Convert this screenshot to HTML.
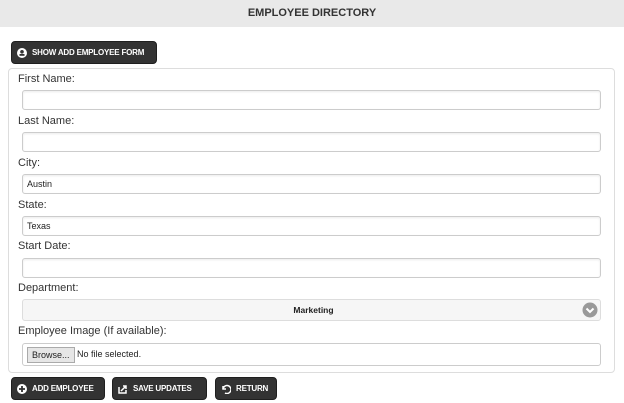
<!DOCTYPE html><html><head><style>
body{margin:0;width:624px;height:403px;background:#fff;font-family:"Liberation Sans",sans-serif;position:relative;overflow:hidden}
.hd{position:absolute;left:0;top:0;width:624px;height:27px;background:#e9e9e9;text-align:center;font-weight:bold;font-size:11px;line-height:27px;color:#333}
.btn{position:absolute;height:23px;background:#333;border:1px solid #1f1f1f;border-radius:4px;color:#fff;font-weight:bold;font-size:8px;line-height:21px;box-sizing:border-box;white-space:nowrap;letter-spacing:-0.2px}
.btn svg{position:absolute;left:5px;top:6px;display:block}
.btn b{position:absolute;left:20px}
.box{position:absolute;left:8px;top:68px;width:607px;height:305px;border:1px solid #ddd;border-radius:4px;box-sizing:border-box}
.lb{position:absolute;left:18px;font-size:11px;color:#333}
.in{position:absolute;left:22px;width:579px;height:20px;border:1px solid #ccc;border-radius:3px;box-sizing:border-box;font-size:9px;line-height:18px;padding-left:4px;color:#222;box-shadow:inset 0 1px 2px rgba(0,0,0,.08)}
</style></head><body>
<div class="hd">EMPLOYEE DIRECTORY</div>
<div class="btn" style="left:11px;top:41px;width:146px"><svg width="10" height="10"><circle cx="5" cy="5" r="5" fill="#fff"/><circle cx="5" cy="3.8" r="1.8" fill="#333"/><rect x="2.5" y="6" width="5" height="1.8" fill="#333"/></svg><b>SHOW ADD EMPLOYEE FORM</b></div>
<div class="box"></div>
<div class="lb" style="top:73px">First Name:</div><div class="in" style="top:90px"></div>
<div class="lb" style="top:115px">Last Name:</div><div class="in" style="top:132px"></div>
<div class="lb" style="top:157px">City:</div><div class="in" style="top:174px">Austin</div>
<div class="lb" style="top:199px">State:</div><div class="in" style="top:216px">Texas</div>
<div class="lb" style="top:240px">Start Date:</div><div class="in" style="top:258px"></div>
<div class="lb" style="top:282px">Department:</div>
<div class="in" style="top:299px;height:22px;background:#f6f6f6;border-color:#ddd;text-align:center;font-weight:bold;font-size:8.5px;line-height:20px;box-shadow:none">Marketing
<svg style="position:absolute;right:2px;top:2px" width="16" height="16"><circle cx="8" cy="8" r="7.5" fill="#999"/><path d="M4.5 6.5L8 10L11.5 6.5" stroke="#fff" stroke-width="2" fill="none"/></svg></div>
<div class="lb" style="top:325px">Employee Image (If available):</div>
<div class="in" style="top:343px;height:23px;box-shadow:none;padding-left:4px;line-height:21px"><span style="display:inline-block;background:#e6e6e6;border:1px solid #aaa;height:14px;line-height:14px;padding:0 4px;font-size:9px;vertical-align:middle">Browse...</span> <span style="font-size:9px">No file selected.</span></div>
<div class="btn" style="left:11px;top:377px;width:94px"><svg width="10" height="10"><circle cx="5" cy="5" r="5" fill="#fff"/><path d="M5 2v6M2 5h6" stroke="#333" stroke-width="1.8"/></svg><b>ADD EMPLOYEE</b></div>
<div class="btn" style="left:112px;top:377px;width:95px"><svg width="10" height="10"><path d="M1 3v6h7V6" stroke="#fff" stroke-width="1.5" fill="none"/><path d="M3 7L8 2M5 2h3v3" stroke="#fff" stroke-width="1.5" fill="none"/></svg><b>SAVE UPDATES</b></div>
<div class="btn" style="left:215px;top:377px;width:62px"><svg width="10" height="10"><path d="M2 2v3h3" stroke="#fff" stroke-width="1.5" fill="none"/><path d="M2 5A4 4 0 1 1 4 9" stroke="#fff" stroke-width="1.5" fill="none"/></svg><b>RETURN</b></div>
</body></html>
